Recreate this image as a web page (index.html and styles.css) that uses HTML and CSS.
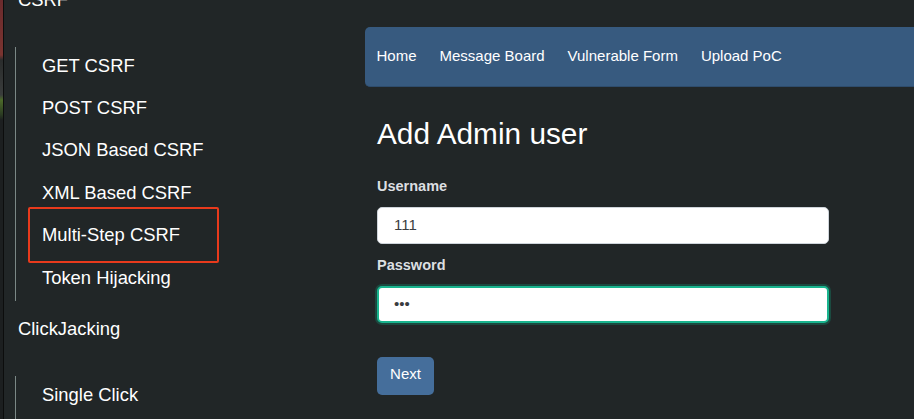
FILE: index.html
```html
<!DOCTYPE html>
<html>
<head>
<meta charset="utf-8">
<title>Multi-Step CSRF</title>
<link rel="stylesheet" href="styles.css">
</head>
<body>
<div id="strip"></div>
<div id="sidebar">
	<div class="group">CSRF</div>
	<ul class="items">
		<li>GET CSRF</li>
		<li>POST CSRF</li>
		<li>JSON Based CSRF</li>
		<li>XML Based CSRF</li>
		<li class="marked">Multi-Step CSRF</li>
		<li>Token Hijacking</li>
	</ul>
	<div class="group">ClickJacking</div>
	<ul class="items">
		<li>Single Click</li>
	</ul>
</div>
<div id="main">
	<div id="navbar">
		<a href="#">Home</a>
		<a href="#">Message Board</a>
		<a href="#">Vulnerable Form</a>
		<a href="#">Upload PoC</a>
	</div>
	<h3>Add Admin user</h3>
	<form id="adminform">
		<label for="username">Username</label>
		<input type="text" id="username" value="111">
		<label for="password">Password</label>
		<input type="password" id="password" class="focused" value="111">
		<button type="button">Next</button>
	</form>
</div>
</body>
</html>
```

FILE: styles.css
```css
html, body {
	margin: 0;
	height: 100%;
	overflow: hidden;
}
body {
	display: flex;
	background: #212627;
	color: #fff;
	font-family: "Liberation Sans", Arial, sans-serif;
}
#strip {
	width: 3px;
	flex-shrink: 0;
	border-right: 1px solid #0c0d0d;
	background: linear-gradient(#6b2b2d 0, #7a3430 55px, #2a2c2c 60px, #3a3d3c 95px, #4c6a2a 100px, #2a3a22 115px, #1c1f20 120px, #1c1f20 100%);
}
#sidebar {
	width: 361px;
	flex-shrink: 0;
	margin-top: -12px;
	font-size: 18.4px;
}
.group {
	line-height: 24px;
	padding-left: 14px;
	margin-bottom: 35px;
}
.items {
	list-style: none;
	margin: 0 0 16px 11px;
	padding: 0 0 0 26px;
	border-left: 1px solid #7b8886;
}
.items li {
	line-height: 24px;
	padding: 6.6px 0 11.8px;
}
.marked {
	position: relative;
}
.marked::after {
	content: "";
	position: absolute;
	left: -14px;
	top: -9.6px;
	width: 191px;
	height: 56px;
	box-sizing: border-box;
	border: 2px solid #e83a1c;
	border-radius: 2px;
}
#main {
	flex: 1;
	padding-top: 27px;
}
#navbar {
	display: flex;
	align-items: center;
	height: 60px;
	box-sizing: border-box;
	padding-bottom: 3px;
	margin-right: -10px;
	background: #375a7f;
	border-bottom: 1px solid #2e4c6c;
	border-radius: 5px;
}
#navbar a {
	color: #fff;
	text-decoration: none;
	font-size: 15px;
	padding: 0 11.5px;
}
h3 {
	margin: 28.6px 0 0 12px;
	font-size: 29.8px;
	font-weight: normal;
	line-height: 36px;
}
#adminform {
	display: flex;
	flex-direction: column;
	align-items: flex-start;
	width: 452px;
	margin: 24.4px 0 0 12px;
}
label {
	font-size: 14.5px;
	font-weight: bold;
	line-height: 20px;
	color: #dcdfe1;
	margin-bottom: 11px;
}
input {
	width: 100%;
	height: 37px;
	box-sizing: border-box;
	padding: 0 16px 2px;
	margin: 0 0 11px;
	font-family: "Liberation Sans", Arial, sans-serif;
	font-size: 15px;
	color: #3a3d3f;
	background: #fff;
	border: 1px solid #ced4da;
	border-radius: 5px;
	outline: none;
}
input.focused {
	border: 2px solid #19b48e;
	padding-left: 15px;
	box-shadow: 0 0 0 2px #1b4a40;
}
button {
	margin-top: 23px;
	width: 57px;
	height: 38px;
	background: #456e9b;
	color: #fff;
	border: none;
	border-radius: 5px;
	font-family: "Liberation Sans", Arial, sans-serif;
	font-size: 15px;
	padding: 0 0 4px;
}
```
